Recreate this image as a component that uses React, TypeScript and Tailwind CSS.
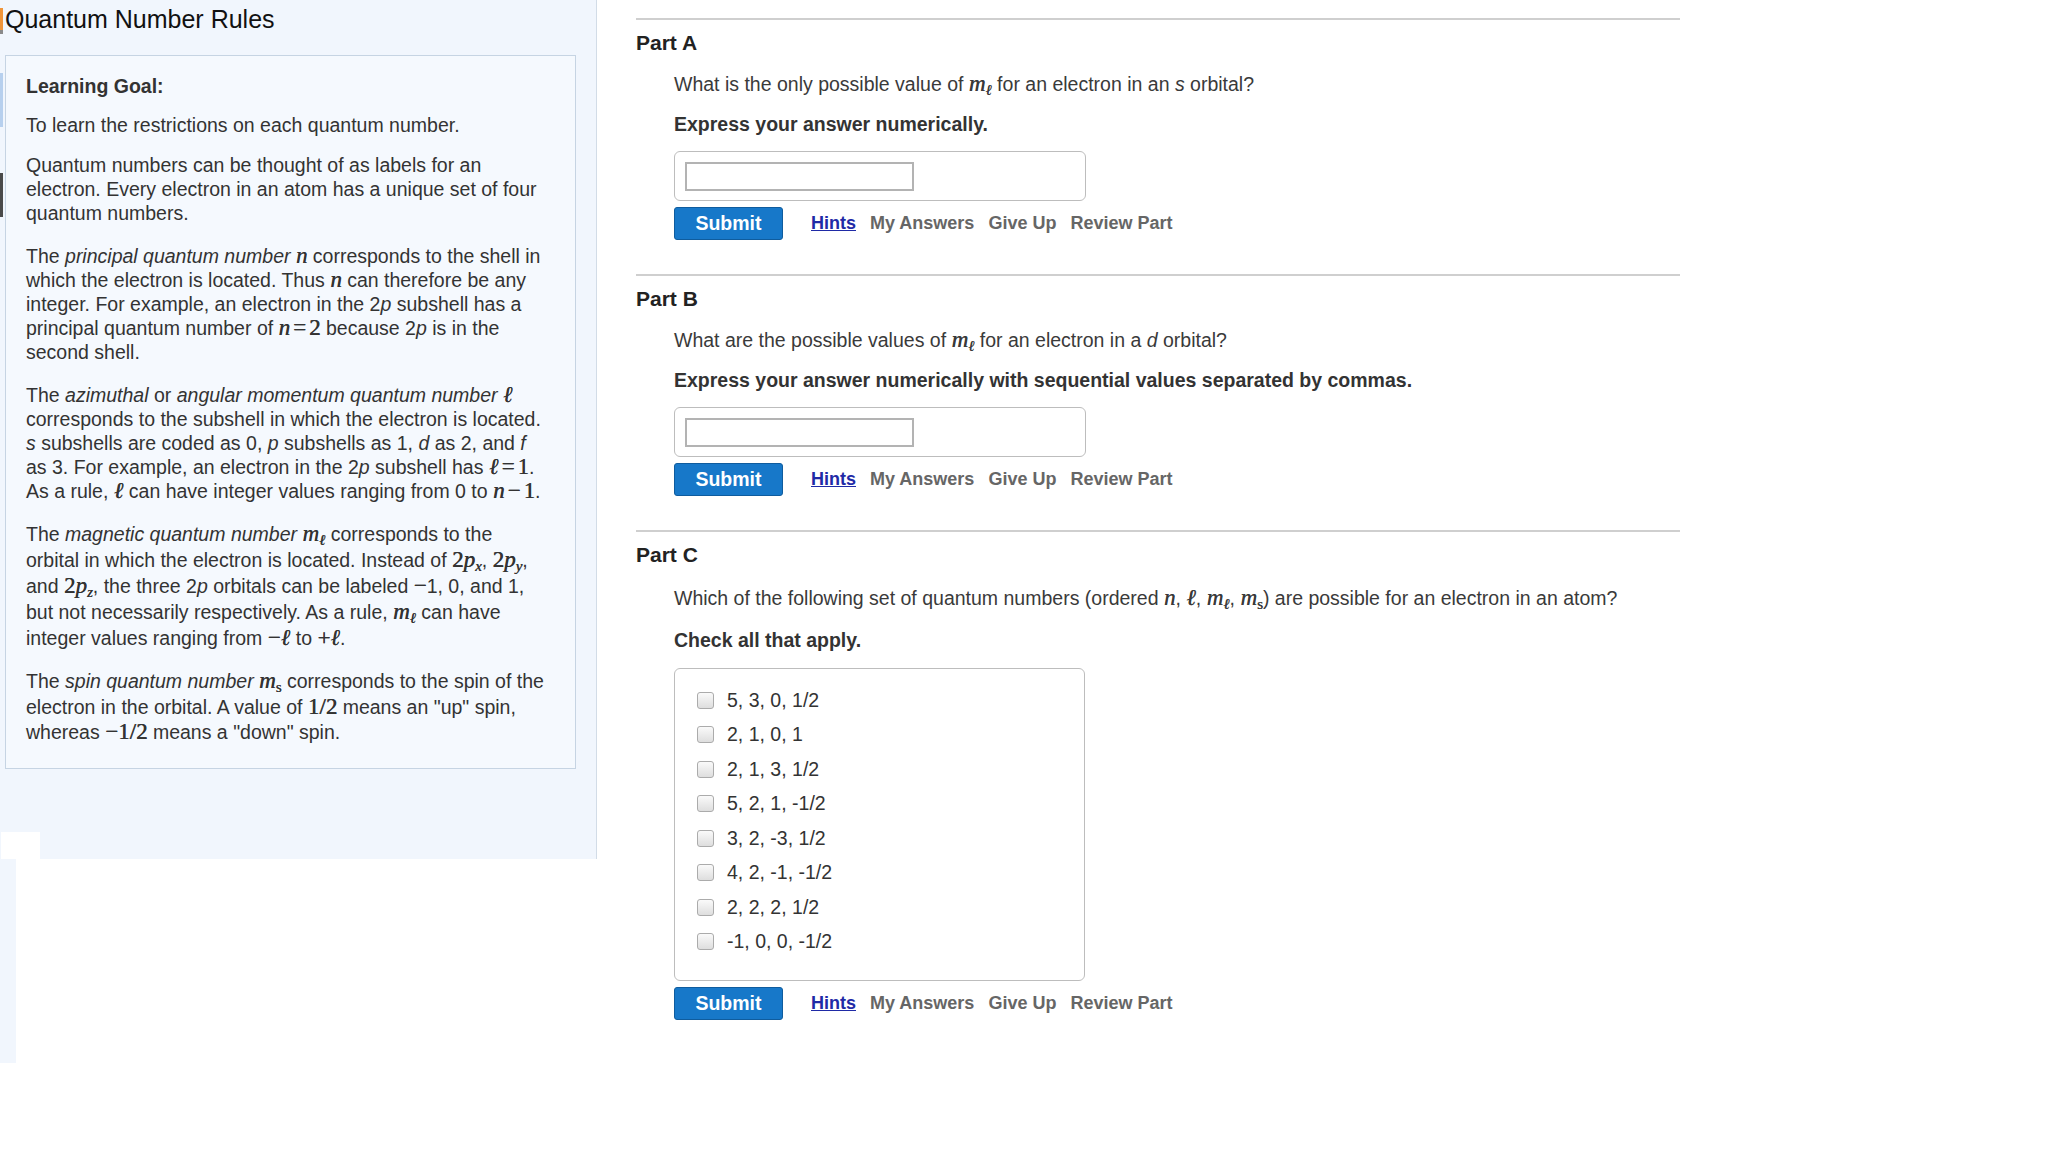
import type { ReactNode } from "react";

const serif = "font-['Liberation_Serif','Times_New_Roman',serif] [text-shadow:0.4px_0_currentColor]";

// math helpers (MathJax-like look)
function V({ children }: { children: ReactNode }) {
  return <span className={`${serif} italic text-[23px] leading-none`}>{children}</span>;
}

function N({ children }: { children: ReactNode }) {
  return <span className={`${serif} text-[23px] leading-none`}>{children}</span>;
}

function Ml() {
  return (
    <V>
      m<sub className="text-[15px] italic">ℓ</sub>
    </V>
  );
}

function Ms() {
  return (
    <V>
      m<sub className="text-[15px] not-italic">s</sub>
    </V>
  );
}

function Op({ children }: { children: ReactNode }) {
  return <span className={`${serif} mx-[3px] text-[23px] leading-none`}>{children}</span>;
}

function ActionRow() {
  return (
    <div className="mt-[6px] flex items-center">
      <button
        type="button"
        className="h-[33px] w-[109px] rounded-[3px] border border-[#0f5c9e] bg-[#1778c9] text-[19.5px] font-bold text-white"
      >
        Submit
      </button>
      <div className="ml-[28px] flex items-center gap-[14px] text-[18px] font-bold text-[#666]">
        <a className="text-[#1f2aa6] underline">Hints</a>
        <span>My Answers</span>
        <span>Give Up</span>
        <span>Review Part</span>
      </div>
    </div>
  );
}

function AnswerBox() {
  return (
    <div className="mt-[15px] h-[50px] w-[412px] rounded-[6px] border border-[#bdbdbd] bg-white pl-[10px] pt-[10px]">
      <input
        type="text"
        className="h-[29px] w-[229px] border-2 border-[#b3b3b3] bg-white outline-none"
      />
    </div>
  );
}

function Part({
  title,
  question,
  instruction,
  gap = "mt-[16px]",
  children,
}: {
  title: string;
  question: ReactNode;
  instruction: string;
  gap?: string;
  children: ReactNode;
}) {
  return (
    <section className="border-t-2 border-[#cfcfcf] pb-[34px] pt-[10px]">
      <h2 className="text-[21px] font-bold leading-[26px] text-[#222]">{title}</h2>
      <div className="pl-[38px]">
        <p className={`${gap} leading-[24px] text-[#3a3a3a]`}>{question}</p>
        <p className={`${gap} font-bold leading-[24px] text-[#333]`}>{instruction}</p>
        {children}
      </div>
    </section>
  );
}

const choices = [
  "5, 3, 0, 1/2",
  "2, 1, 0, 1",
  "2, 1, 3, 1/2",
  "5, 2, 1, -1/2",
  "3, 2, -3, 1/2",
  "4, 2, -1, -1/2",
  "2, 2, 2, 1/2",
  "-1, 0, 0, -1/2",
];

export default function App() {
  return (
    <div className="flex min-h-[1150px] w-full bg-white font-['Liberation_Sans',Arial,sans-serif] text-[19.5px] text-[#333]">
      {/* left column */}
      <div className="flex w-[597px] shrink-0 flex-col">
        <aside className="flex h-[859px] flex-col border-r border-[#d2dce7] bg-[#f1f6fd]">
          <div className="flex flex-1">
            <div className="flex w-[3px] shrink-0 flex-col">
              <div className="mt-[8px] h-[22px] bg-[#f0953a]" />
              <div className="h-[4px] bg-[#8a8a8a]" />
              <div className="mt-[39px] h-[54px] bg-[#b7d0ee]" />
              <div className="mt-[46px] h-[44px] bg-[#4a4a4a]" />
            </div>
            <div className="flex-1 pl-[2px]">
              <h1 className="pt-[4px] text-[25px] leading-[30px] text-[#111]">Quantum Number Rules</h1>
              <div className="mt-[21px] h-[714px] w-[571px] border border-[#c6d4e3] bg-[#f5f9fe] pl-[20px] pt-[18px] leading-[24px]">
                <p className="font-bold">Learning Goal:</p>
                <p className="mt-[15px]">To learn the restrictions on each quantum number.</p>
                <p className="mt-[16px]">
                  Quantum numbers can be thought of as labels for an
                  <br />
                  electron. Every electron in an atom has a unique set of four
                  <br />
                  quantum numbers.
                </p>
                <p className="mt-[19px]">
                  The <i>principal quantum number</i> <V>n</V> corresponds to the shell in
                  <br />
                  which the electron is located. Thus <V>n</V> can therefore be any
                  <br />
                  integer. For example, an electron in the 2<i>p</i> subshell has a
                  <br />
                  principal quantum number of <V>n</V>
                  <Op>=</Op>
                  <N>2</N> because 2<i>p</i> is in the
                  <br />
                  second shell.
                </p>
                <p className="mt-[19px]">
                  The <i>azimuthal</i> or <i>angular momentum quantum number</i> <V>ℓ</V>
                  <br />
                  corresponds to the subshell in which the electron is located.
                  <br />
                  <i>s</i> subshells are coded as 0, <i>p</i> subshells as 1, <i>d</i> as 2, and <i>f</i>
                  <br />
                  as 3. For example, an electron in the 2<i>p</i> subshell has <V>ℓ</V>
                  <Op>=</Op>
                  <N>1</N>.
                  <br />
                  As a rule, <V>ℓ</V> can have integer values ranging from 0 to <V>n</V>
                  <Op>−</Op>
                  <N>1</N>.
                </p>
                <p className="mt-[18px] leading-[26px]">
                  The <i>magnetic quantum number</i> <Ml /> corresponds to the
                  <br />
                  orbital in which the electron is located. Instead of{" "}
                  <N>2</N>
                  <V>
                    p<sub className="text-[15px]">x</sub>
                  </V>
                  , <N>2</N>
                  <V>
                    p<sub className="text-[15px]">y</sub>
                  </V>
                  ,
                  <br />
                  and <N>2</N>
                  <V>
                    p<sub className="text-[15px]">z</sub>
                  </V>
                  , the three 2<i>p</i> orbitals can be labeled <N>−</N>1, 0, and 1,
                  <br />
                  but not necessarily respectively. As a rule, <Ml /> can have
                  <br />
                  integer values ranging from <N>−</N>
                  <V>ℓ</V> to <N>+</N>
                  <V>ℓ</V>.
                </p>
                <p className="mt-[18px] leading-[25.5px]">
                  The <i>spin quantum number</i> <Ms /> corresponds to the spin of the
                  <br />
                  electron in the orbital. A value of <N>1/2</N> means an "up" spin,
                  <br />
                  whereas <N>−1/2</N> means a "down" spin.
                </p>
              </div>
            </div>
          </div>
          <div className="ml-[1px] h-[27px] w-[39px] bg-white" />
        </aside>
        <div className="h-[204px] w-[16px] bg-[#f1f6fd]" />
      </div>

      {/* right column */}
      <main className="ml-[39px] w-[1044px] pt-[18px]">
        <Part
          title="Part A"
          question={
            <>
              What is the only possible value of <Ml /> for an electron in an <i>s</i> orbital?
            </>
          }
          instruction="Express your answer numerically."
        >
          <AnswerBox />
          <ActionRow />
        </Part>

        <Part
          title="Part B"
          question={
            <>
              What are the possible values of <Ml /> for an electron in a <i>d</i> orbital?
            </>
          }
          instruction="Express your answer numerically with sequential values separated by commas."
        >
          <AnswerBox />
          <ActionRow />
        </Part>

        <Part
          title="Part C"
          gap="mt-[18px]"
          question={
            <>
              Which of the following set of quantum numbers (ordered <V>n</V>, <V>ℓ</V>, <Ml />, <Ms />) are
              possible for an electron in an atom?
            </>
          }
          instruction="Check all that apply."
        >
          <div className="mt-[16px] w-[411px] rounded-[6px] border border-[#bdbdbd] bg-white pb-[21px] pl-[22px] pt-[14px]">
            {choices.map((c) => (
              <label key={c} className="flex h-[34.5px] items-center gap-[13px]">
                <span className="h-[17px] w-[17px] rounded-[3px] border border-[#ababab] bg-gradient-to-b from-[#fafafa] to-[#dedede]" />
                <span>{c}</span>
              </label>
            ))}
          </div>
          <ActionRow />
        </Part>
      </main>
    </div>
  );
}
